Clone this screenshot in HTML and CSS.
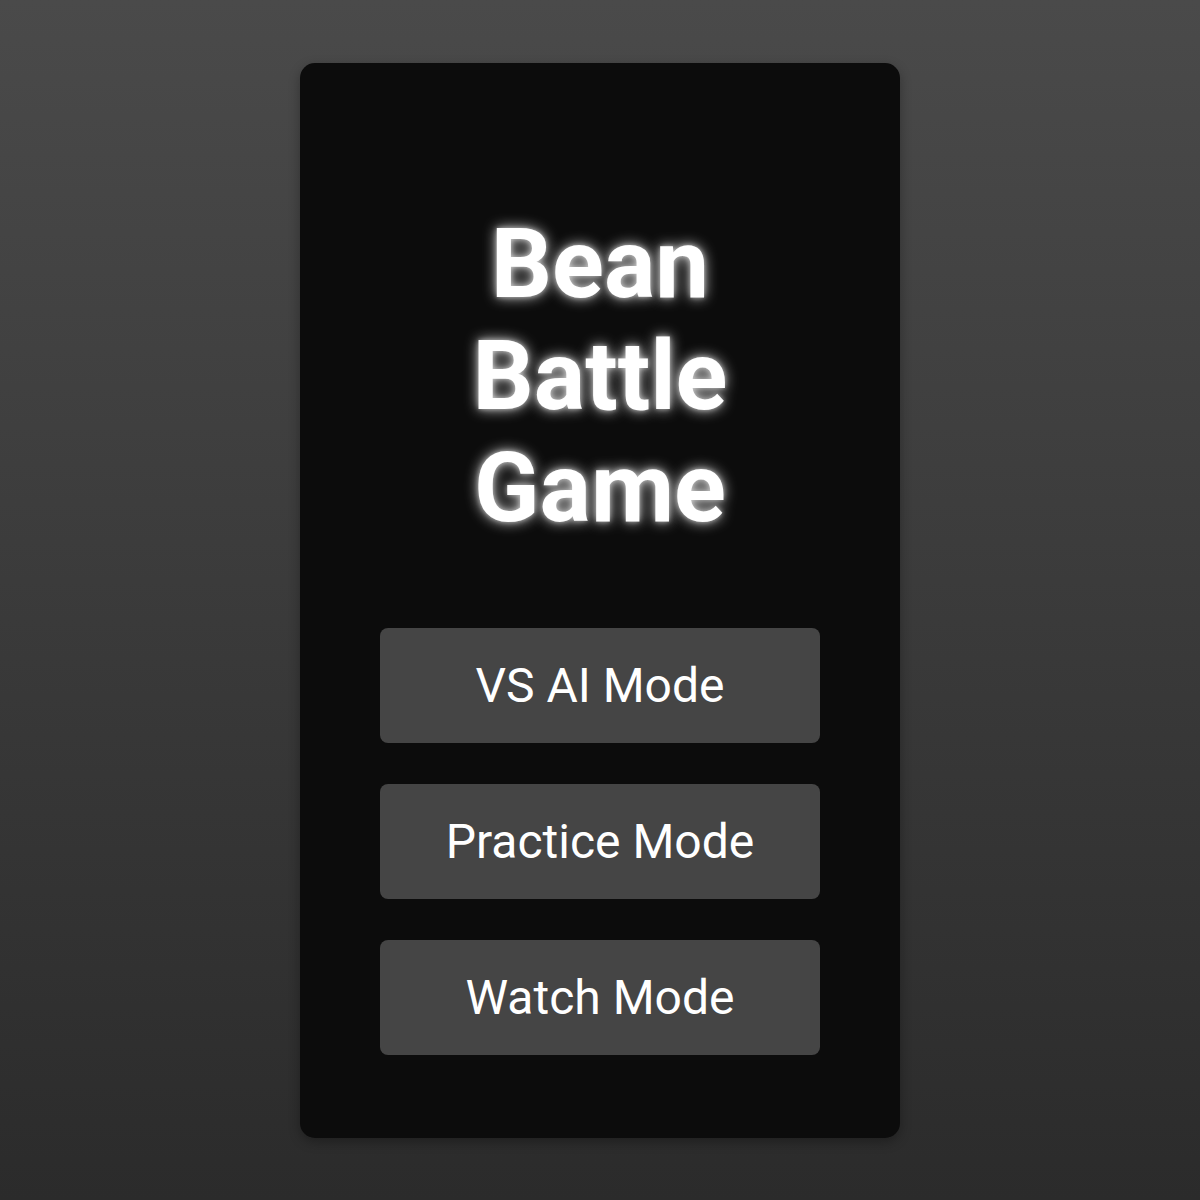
FILE: index.html
```html
<!DOCTYPE html>
<html lang="en">
<head>
    <meta charset="UTF-8">
    <meta name="viewport" content="width=device-width, initial-scale=1.0">
    <title>Bean Battle Game</title>
    <link rel="stylesheet" href="styles.css">
</head>
<body>
    <div class="menu-container">
        <h1 class="title">Bean Battle Game</h1>
        <div class="mode-list">
            <button class="mode-btn">VS AI Mode</button>
            <button class="mode-btn">Practice Mode</button>
            <button class="mode-btn">Watch Mode</button>
        </div>
    </div>
</body>
</html>
```

FILE: styles.css
```css
body {
    font-family: Roboto, 'Noto Sans', sans-serif;
    margin: 0;
    min-height: 100vh;
    display: flex;
    align-items: center;
    justify-content: center;
    background: linear-gradient(to bottom, #4a4a4a, #2b2b2b);
    color: white;
}
.menu-container {
    width: 600px;
    box-sizing: border-box;
    padding: 80px 80px 83px;
    background: #0c0c0c;
    border-radius: 15px;
    box-shadow: 0 4px 12px rgba(0,0,0,0.3);
    text-align: center;
}
.title {
    font-size: 96px;
    font-weight: 700;
    line-height: normal;
    margin: 65px 0 84px;
    text-shadow: 0 0 14px rgba(255,255,255,0.8), 0 0 5px rgba(255,255,255,0.5);
}
.mode-list {
    display: flex;
    flex-direction: column;
    gap: 41px;
}
.mode-btn {
    height: 115px;
    font-family: inherit;
    font-size: 48px;
    color: white;
    background: #454545;
    border: none;
    border-radius: 8px;
    cursor: pointer;
}
.mode-btn:hover {
    background: #555;
}
```
